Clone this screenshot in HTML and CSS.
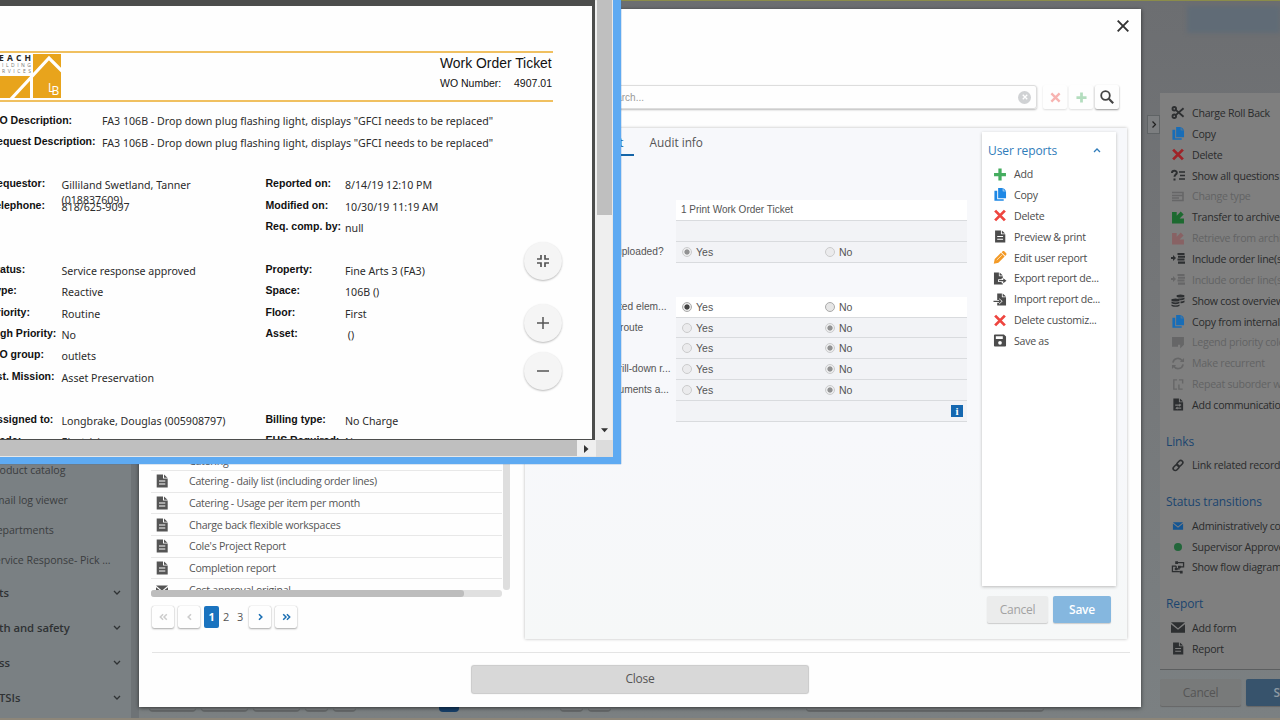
FILE: index.html
```
<!DOCTYPE html>
<html lang="en">
<head>
  <meta charset="UTF-8">
  <title>User reports</title>
  <link rel="stylesheet" href="styles.css">
</head>
<body>
  <svg class="sprite" aria-hidden="true">
    <symbol id="doc" viewBox="0 0 12 14"><path fill="currentColor" fill-rule="evenodd" d="M.7.5H7v4h4.700v9H.7zM3 6.500v1.100h6.300V6.500zm0 3v1.100h6.300V9.500z"/><path fill="currentColor" d="M8 .5l3.500 3.200H8z"/></symbol>
    <symbol id="copy" viewBox="0 0 14 14"><path fill="#1e88e5" d="M5 0h5v3.500h3.500V11H5z"/><path fill="#1e88e5" d="M10.600 0l2.900 2.900h-2.900zM1 3h3v9h7v1.800H1z"/></symbol>
    <symbol id="x" viewBox="0 0 12 12"><path stroke="currentColor" stroke-width="2.600" d="M1.500 1.500l9 9M10.500 1.500l-9 9"/></symbol>
    <symbol id="close" viewBox="0 0 12 12"><path stroke="currentColor" stroke-width="1.900" d="M.700.700l10.600 10.600M11.300.700L.700 11.300"/></symbol>
    <symbol id="plus" viewBox="0 0 12 12"><path stroke="currentColor" stroke-width="3" d="M6 .5v11M.5 6h11"/></symbol>
    <symbol id="pencil" viewBox="0 0 14 14"><path fill="#f39a26" d="M.3 13.700l1-5L8 2l4 4-6.700 6.700zM8.700 1.300L9.900.300c.5-.4 1.200-.4 1.700 0l2.100 2.100c.4.500.4 1.200 0 1.700l-1 1.200z"/><path stroke="#fff" stroke-width=".7" d="M3.500 9.800L9 4.500"/></symbol>
    <symbol id="export" viewBox="0 0 14 14"><path fill="currentColor" d="M.5.5h5.300v4H10v2.300H8.800v1H5v3h3.800v1.300H10v1.400H.500zM6.600.500L10 3.700H6.600z"/><path fill="currentColor" d="M6 8.700h4.500V6.600l3.500 2.700-3.500 2.700V9.900H6z"/></symbol>
    <symbol id="import" viewBox="0 0 14 14"><path fill="currentColor" d="M4 .5h5v4h4.500v9H4v-3h2v1.800L9.800 9 6 5.700v1.800H4z"/><path fill="currentColor" d="M9.900.5l3.600 3.300H9.900zM0 8.300h6v1.400H0zM6 6.500L8.800 9 6 11.500z"/></symbol>
    <symbol id="save" viewBox="0 0 14 14"><path fill="currentColor" fill-rule="evenodd" d="M1.500.5h9.700l2.300 2.300v9.700q0 1-1 1h-11q-1 0-1-1v-11q0-1 1-1zM2.500 2.500v3h7.500v-3zM7 7.500a2 2 0 100 4 2 2 0 000-4z"/></symbol>
    <symbol id="mail" viewBox="0 0 14 11"><path fill="currentColor" d="M0 .3h14L7 6.300zM0 2.200l7 5.600 7-5.600v8.500H0z"/></symbol>
    <symbol id="scissors" viewBox="0 0 14 14"><g fill="none" stroke="currentColor" stroke-width="2"><circle cx="3" cy="3" r="1.900"/><circle cx="3" cy="11" r="1.900"/><path d="M4.500 4.200L13 11.500M4.500 9.800L13 2.500"/></g></symbol>
    <symbol id="questions" viewBox="0 0 14 12"><path fill="none" stroke="currentColor" stroke-width="2" d="M1 3.500C1 .700 5.800.700 5.800 3.200 5.800 5.200 3.500 5 3.500 7.300M3.500 9v2"/><path stroke="currentColor" stroke-width="1.400" d="M8 2.500h6M9 6h5M8 9.500h6"/></symbol>
    <symbol id="card" viewBox="0 0 14 12"><path fill="none" stroke="currentColor" stroke-width="1.600" d="M1 2h11v3H1M12 5v5H1M1 7.500h7"/></symbol>
    <symbol id="archive" viewBox="0 0 12 12"><path fill="currentColor" d="M.5 1h4.300v3.300L8.500.5l2.700 2.700L7.500 7h4v4.500H.500z"/></symbol>
    <symbol id="stackin" viewBox="0 0 14 13"><path fill="currentColor" d="M0 5h2V3l3 3-3 3V7H0zM6.500 1h7v2h-7zM7 3.800h7v2H7zM6.500 6.600h7v2h-7zM7 9.400h7v2.400H7z"/></symbol>
    <symbol id="coins" viewBox="0 0 14 13"><g fill="currentColor"><ellipse cx="9.500" cy="2" rx="4" ry="1.500"/><path d="M7 4.200q3 1 6.500-.8v1.800Q11 6.800 9 6.200zM9.500 7.600q2 0 4-1v1.700q-2 1.200-4 1z"/><ellipse cx="4.500" cy="6" rx="4.200" ry="1.500"/><path d="M.5 7.500q4 2 8 0v1.800q-4 2-8 0zM.5 10.400q4 2 8 0v1.500q-4 1.800-8 0z"/></g></symbol>
    <symbol id="note" viewBox="0 0 12 12"><path fill="currentColor" d="M.5 1h11v7L8 11.500V8H6v2H.500z"/></symbol>
    <symbol id="cycle" viewBox="0 0 14 14"><path fill="none" stroke="currentColor" stroke-width="1.800" d="M1.500 6a5.500 5.500 0 0110-2M12.500 8a5.500 5.500 0 01-10 2"/><path fill="currentColor" d="M13.500 1v4.500H9zM.500 13V8.500H5z"/></symbol>
    <symbol id="repeat" viewBox="0 0 12 14"><path fill="none" stroke="currentColor" stroke-width="1.500" d="M5 2H1.500v10H5M7 2h4v4M7 7v5h4"/></symbol>
    <symbol id="message" viewBox="0 0 12 14"><path fill="currentColor" fill-rule="evenodd" d="M1 .5h6v4h4.500v9H1zM3 7v1.300h4V9.500L9.800 7.600 7.500 6v1zM9.500 11.500v-1.200H5.500V9.200L3 11l2.500 1.500v-1z"/><path fill="currentColor" d="M8 .5l3.500 3.200H8z"/></symbol>
    <symbol id="link" viewBox="0 0 14 14"><g fill="none" stroke="currentColor" stroke-width="1.700"><rect x="5.500" y="2.500" width="7" height="4.500" rx="2.200" transform="rotate(-45 9 4.700)"/><rect x="1.500" y="7" width="7" height="4.500" rx="2.200" transform="rotate(-45 5 9.300)"/></g></symbol>
    <symbol id="flow" viewBox="0 0 14 14"><path fill="none" stroke="currentColor" stroke-width="1.400" d="M5 1.800h8v4.500H8M5 5.500H1v6h4M5 5.500v3h4M5 11.500h4"/><path fill="currentColor" d="M4 .3h3v3H4zM7 5h3v2.800H7zM3.500 7.500h3v2.500h-3zM9 10.500h3v3H9z"/></symbol>
    <symbol id="down" viewBox="0 0 8 5"><path fill="none" stroke="currentColor" stroke-width="1.300" d="M1 1l3 3 3-3"/></symbol>
    <symbol id="next" viewBox="0 0 6 8"><path fill="none" stroke="currentColor" stroke-width="1.600" d="M1.500 1.200L4.300 4 1.500 6.800"/></symbol>
    <symbol id="last" viewBox="0 0 9 8"><path fill="none" stroke="currentColor" stroke-width="1.500" d="M1.200 1.200L4 4 1.200 6.800M4.900 1.200L7.700 4 4.900 6.800"/></symbol>
  </svg>

  <div class="app">
    <nav class="sidebar">
      <a>Product catalog</a>
      <a>Email log viewer</a>
      <a>Departments</a>
      <a>Service Response- Pick ...</a>
      <h4>ts<svg><use href="#down"/></svg></h4>
      <h4>th and safety<svg><use href="#down"/></svg></h4>
      <h4>ss<svg><use href="#down"/></svg></h4>
      <h4>TSIs<svg><use href="#down"/></svg></h4>
    </nav>
    <div class="workspace">
      <div class="toolbar"><i></i><i></i><i></i><i class="sm"></i><i class="sm"></i><b></b><i class="sm last"></i><i class="sm"></i><u></u></div>
    </div>
    <div class="gutter"><span class="collapse"><svg><use href="#down"/></svg></span></div>
    <aside class="actions">
      <div class="top-button"></div>
      <div class="action-panel">
        <ul>
          <li><svg><use href="#scissors"/></svg>Charge Roll Back</li>
          <li><svg><use href="#copy"/></svg>Copy</li>
          <li><svg class="red"><use href="#x"/></svg>Delete</li>
          <li><svg><use href="#questions"/></svg>Show all questions</li>
          <li class="off"><svg><use href="#card"/></svg>Change type</li>
          <li><svg class="green"><use href="#archive"/></svg>Transfer to archive</li>
          <li class="off"><svg class="red"><use href="#archive"/></svg>Retrieve from archive</li>
          <li><svg><use href="#stackin"/></svg>Include order line(s)</li>
          <li class="off"><svg><use href="#stackin"/></svg>Include order line(s)</li>
          <li><svg><use href="#coins"/></svg>Show cost overview</li>
          <li><svg><use href="#copy"/></svg>Copy from internal</li>
          <li class="off"><svg><use href="#note"/></svg>Legend priority colors</li>
          <li class="off"><svg><use href="#cycle"/></svg>Make recurrent</li>
          <li class="off"><svg><use href="#repeat"/></svg>Repeat suborder w</li>
          <li><svg><use href="#message"/></svg>Add communication</li>
        </ul>
        <h3>Links</h3>
        <ul><li><svg><use href="#link"/></svg>Link related records</li></ul>
        <h3>Status transitions</h3>
        <ul>
          <li><svg class="blue small"><use href="#mail"/></svg>Administratively co</li>
          <li><span class="dot"></span>Supervisor Approved</li>
          <li><svg><use href="#flow"/></svg>Show flow diagram</li>
        </ul>
        <h3>Report</h3>
        <ul>
          <li><svg><use href="#mail"/></svg>Add form</li>
          <li><svg><use href="#doc"/></svg>Report</li>
        </ul>
      </div>
      <div class="buttons"><span class="btn">Cancel</span><span class="btn primary">Save</span></div>
    </aside>
  </div>

  <div class="dialog">
    <div class="dialog-head"><svg><use href="#close"/></svg></div>
    <div class="search-row">
      <div class="search"><span>Search...</span><em><svg><use href="#x"/></svg></em></div>
      <span class="tool off"><svg class="red"><use href="#x"/></svg></span>
      <span class="tool off"><svg class="green"><use href="#plus"/></svg></span>
      <span class="tool"><svg class="lens" viewBox="0 0 14 14"><circle cx="5.500" cy="5.500" r="4.300" fill="none" stroke="#444" stroke-width="1.800"/><path d="M8.800 8.800l4.400 4.400" stroke="#444" stroke-width="2.200"/></svg></span>
    </div>
    <div class="dialog-body">
      <div class="list">
        <div class="list-view">
          <div class="rows">
            <div class="row">Catering</div>
            <div class="row"><svg><use href="#doc"/></svg>Catering - daily list (including order lines)</div>
            <div class="row"><svg><use href="#doc"/></svg>Catering - Usage per item per month</div>
            <div class="row"><svg><use href="#doc"/></svg>Charge back flexible workspaces</div>
            <div class="row"><svg><use href="#doc"/></svg>Cole's Project Report</div>
            <div class="row"><svg><use href="#doc"/></svg>Completion report</div>
            <div class="row"><svg><use href="#mail"/></svg>Cost approval original</div>
          </div>
          <div class="vbar"></div>
        </div>
        <div class="hbar"><div></div></div>
        <div class="pager">
          <span class="page-btn off"><svg class="flip"><use href="#last"/></svg></span>
          <span class="page-btn off"><svg class="flip"><use href="#next"/></svg></span>
          <b>1</b><span>2</span><span>3</span>
          <span class="page-btn"><svg><use href="#next"/></svg></span>
          <span class="page-btn"><svg><use href="#last"/></svg></span>
        </div>
      </div>
      <div class="detail">
        <div class="form">
          <div class="tabs"><span class="tab active">Report</span><span class="tab">Audit info</span></div>
          <div class="field"><label></label><div class="value edit">1 Print Work Order Ticket</div></div>
          <div class="field"><label></label><div class="value"></div></div>
          <div class="field"><label class="l1">uploaded?</label><div class="value"><span class="opt off"><i class="on"></i>Yes</span><span class="opt off"><i></i>No</span></div></div>
          <div class="field gap"><label>ted elem...</label><div class="value edit"><span class="opt"><i class="on"></i>Yes</span><span class="opt"><i></i>No</span></div></div>
          <div class="field"><label class="l2">route</label><div class="value"><span class="opt off"><i></i>Yes</span><span class="opt off"><i class="on"></i>No</span></div></div>
          <div class="field"><label></label><div class="value"><span class="opt off"><i></i>Yes</span><span class="opt off"><i class="on"></i>No</span></div></div>
          <div class="field"><label class="l3">rill-down r...</label><div class="value"><span class="opt off"><i></i>Yes</span><span class="opt off"><i class="on"></i>No</span></div></div>
          <div class="field"><label class="l3">uments a...</label><div class="value"><span class="opt off"><i></i>Yes</span><span class="opt off"><i class="on"></i>No</span></div></div>
          <div class="field"><label></label><div class="value"><span class="info">i</span></div></div>
        </div>
        <div class="side">
          <div class="card">
            <h3>User reports<svg><use href="#down"/></svg></h3>
            <ul>
              <li><svg class="green"><use href="#plus"/></svg>Add</li>
              <li><svg><use href="#copy"/></svg>Copy</li>
              <li><svg class="red"><use href="#x"/></svg>Delete</li>
              <li><svg><use href="#doc"/></svg>Preview &amp; print</li>
              <li><svg><use href="#pencil"/></svg>Edit user report</li>
              <li><svg><use href="#export"/></svg>Export report de...</li>
              <li><svg><use href="#import"/></svg>Import report de...</li>
              <li><svg class="red"><use href="#x"/></svg>Delete customiz...</li>
              <li><svg><use href="#save"/></svg>Save as</li>
            </ul>
          </div>
          <div class="buttons"><span class="btn">Cancel</span><span class="btn primary">Save</span></div>
        </div>
      </div>
    </div>
    <div class="dialog-foot"><span class="close">Close</span></div>
  </div>

  <div class="viewer">
    <div class="view-row">
      <div class="paper">
        <div class="letterhead">
          <svg class="logo" viewBox="0 0 62 46">
            <path fill="#e8a41c" d="M33 1h28v44H33zM-2 23h32v22H-2z"/>
            <path fill="none" stroke="#fff" stroke-width="3.200" d="M11 46L49 5l13 13"/>
            <path stroke="#fff" stroke-width="2" d="M31.500 0v46"/>
            <text class="brand" x="-1" y="7.500" textLength="32">EACH</text>
            <text class="brand-sub" x="2" y="14" textLength="29">ILDING</text>
            <text class="brand-sub" x="2" y="20" textLength="29">RVICES</text>
            <text class="mark" x="48" y="39">L</text><text class="mark" x="51.500" y="42">B</text>
          </svg>
          <div class="title">
            <div class="t1">Work Order Ticket</div>
            <div class="t2"><span>WO Number:</span><span>4907.01</span></div>
          </div>
        </div>
        <div class="sheet wide">
          <b>WO Description:</b><span>FA3 106B - Drop down plug flashing light, displays "GFCI needs to be replaced"</span>
          <b>Request Description:</b><span>FA3 106B - Drop down plug flashing light, displays "GFCI needs to be replaced"</span>
        </div>
        <div class="sheet">
          <b>Requestor:</b><span>Gilliland Swetland, Tanner<br>(018837609)</span><b>Reported on:</b><span>8/14/19 12:10 PM</span>
          <b>Telephone:</b><span>818/625-9097</span><b>Modified on:</b><span>10/30/19 11:19 AM</span>
          <b></b><span></span><b>Req. comp. by:</b><span>null</span>
          <b></b><span></span><b></b><span></span>
          <b>Status:</b><span>Service response approved</span><b>Property:</b><span>Fine Arts 3 (FA3)</span>
          <b>Type:</b><span>Reactive</span><b>Space:</b><span>106B ()</span>
          <b>Priority:</b><span>Routine</span><b>Floor:</b><span>First</span>
          <b>High Priority:</b><span>No</span><b>Asset:</b><span>&nbsp;()</span>
          <b>WO group:</b><span>outlets</span><b></b><span></span>
          <b>Est. Mission:</b><span>Asset Preservation</span><b></b><span></span>
          <b></b><span></span><b></b><span></span>
          <b>Assigned to:</b><span>Longbrake, Douglas (005908797)</span><b>Billing type:</b><span>No Charge</span>
          <b>Trade:</b><span>Electrician</span><b>EHS Required:</b><span>No</span>
        </div>
        <div class="zoom-tools">
          <span><svg viewBox="0 0 14 14"><path fill="none" stroke="#555" stroke-width="1.700" d="M1 5h4V1M9 1v4h4M13 9H9v4M5 13V9H1"/></svg></span>
          <span><svg viewBox="0 0 14 14"><path stroke="#555" stroke-width="1.500" d="M7 1v12M1 7h12"/></svg></span>
          <span><svg viewBox="0 0 14 14"><path stroke="#555" stroke-width="1.500" d="M1 7h12"/></svg></span>
        </div>
      </div>
      <div class="scroll-y"><div class="thumb"></div><svg viewBox="0 0 8 5"><path fill="#333" d="M0 0h8L4 4.500z"/></svg></div>
    </div>
    <div class="scroll-x"><div class="thumb"></div><div class="arrow"><svg viewBox="0 0 5 8"><path fill="#333" d="M0 0v8l4.500-4z"/></svg></div><div class="corner"></div></div>
  </div>
</body>
</html>
```
FILE: styles.css
```
* {
  box-sizing: border-box;
}
body {
  margin: 0;
  width: 1280px;
  height: 720px;
  overflow: hidden;
  position: relative;
  font-family: "Open Sans", sans-serif;
  font-size: 10.6px;
  letter-spacing: -0.27px;
  color: #555;
}
ul {
  list-style: none;
  margin: 0;
  padding: 0;
}
h3, h4 {
  margin: 0;
  font-weight: normal;
}
.sprite {
  position: absolute;
  width: 0;
  height: 0;
}
.red { color: #ee453f; }
.green { color: #45ad5f; }
.blue { color: #1e78c8; }

/* page behind the dialog */
.app {
  display: flex;
  height: 720px;
  border-top: 1px solid #8b8c4a;
  border-bottom: 2px solid #8d8679;
  background: linear-gradient(#6c6e71, #747678 40%, #7b8082);
}
.sidebar {
  width: 131px;
  padding-top: 454px;
  background: #7a8083;
  color: #3a3d3f;
  letter-spacing: -0.05px;
}
.sidebar a {
  display: block;
  height: 30px;
  line-height: 30px;
  margin-left: -11px;
  white-space: nowrap;
}
.sidebar h4 {
  display: flex;
  align-items: center;
  justify-content: space-between;
  height: 35px;
  padding-right: 10px;
  margin-left: -1px;
  font-size: 11.3px;
  font-weight: 600;
  color: #2f3234;
  white-space: nowrap;
}
.sidebar svg {
  width: 8px;
  height: 5px;
}
.workspace {
  width: 1018px;
  padding: 698px 0 0 16px;
  border-left: 8px solid #6e7376;
}
.toolbar {
  display: flex;
  gap: 5px;
}
.toolbar i, .toolbar b, .toolbar u {
  width: 47px;
  height: 13px;
  background: #7e8183;
  border-bottom: 2px solid #65686a;
  border-radius: 4px;
}
.toolbar i:first-child { margin-left: -6px; }
.toolbar .sm { width: 23px; }
.toolbar b { width: 20px; margin-left: 78px; background: #173f68; border-color: #173f68; }
.toolbar .last { margin-left: 96px; }
.toolbar u { width: 238px; margin-left: 190px; }
.gutter {
  width: 11px;
  flex: none;
  padding-top: 114px;
}
.collapse {
  display: flex;
  align-items: center;
  justify-content: center;
  width: 13px;
  height: 19px;
  margin-left: -2px;
  background: #7c7e80;
  border: 1px solid #5f6365;
}
.collapse svg {
  width: 8px;
  height: 5px;
  transform: rotate(-90deg);
  color: #222;
}
.actions {
  flex: none;
  width: 120px;
  overflow: hidden;
  white-space: nowrap;
  color: #2a2b2c;
}
.top-button {
  height: 27px;
  margin: 5px 0 60px 27px;
  background: #606b76;
  filter: blur(2px);
}
.action-panel {
  height: 577px;
  padding: 9.5px 0 0 6px;
  background: #7f7f7f;
  border-bottom: 1px solid #5c5e5f;
}
li {
  display: flex;
  align-items: center;
  height: 20.87px;
  white-space: nowrap;
}
li svg {
  width: 14px;
  height: 13px;
  margin: 0 7px 0 5px;
  flex: none;
}
.actions svg { color: #2d2f31; }
.actions .red { color: #9f2328; }
.actions .green { color: #1d6a30; }
.actions .blue { color: #155592; }
.actions use[href="#copy"] { filter: brightness(0.8); }
.actions .off { color: #626364; }
.actions .off svg { opacity: 0.3; }
.actions svg.small { height: 8px; }
.dot {
  flex: none;
  width: 8px;
  height: 8px;
  margin: 0 10px 0 8px;
  border-radius: 50%;
  background: #22663a;
}
h3 {
  font-size: 12px;
  letter-spacing: -0.1px;
  color: #2f7cba;
}
.action-panel h3 {
  height: 39.5px;
  line-height: 18px;
  padding-top: 17.5px;
  color: #1b456f;
}
.actions .buttons { margin-top: 9px; }
.buttons {
  display: flex;
  gap: 5px;
}
.btn {
  width: 61px;
  height: 27px;
  line-height: 27px;
  text-align: center;
  font-size: 12px;
  color: #a2a2a2;
  background: #ebecec;
  border-radius: 2px;
  box-shadow: 0 1px 1px #ccc;
}
.btn.primary {
  width: 58px;
  color: #fff;
  font-weight: 600;
  background: #85b7df;
}
.actions .btn {
  flex: none;
  width: 81px;
  color: #555;
  background: #787a7a;
  box-shadow: 0 1px 1px #666;
}
.actions .btn.primary {
  background: #37536c;
  color: #8d99a3;
}

/* dialog */
.dialog {
  position: absolute;
  left: 139px;
  top: 9px;
  width: 1002px;
  height: 698px;
  background: #fefefe;
  box-shadow: 0 1px 4px rgba(0, 0, 0, 0.6);
}
.dialog-head {
  height: 76px;
  padding: 11px 12px;
  text-align: right;
}
.dialog-head svg {
  width: 12px;
  height: 12px;
  color: #333;
}
.search-row {
  display: flex;
  gap: 2px;
  height: 24px;
  padding-right: 22px;
}
.search {
  display: flex;
  align-items: center;
  justify-content: space-between;
  width: 434px;
  margin: 0 4px 0 auto;
  padding: 0 5px 0 0;
  border: 1px solid #ddd;
  border-radius: 3px;
  box-shadow: 0 1px 2px #bbb;
  font-size: 10px;
  letter-spacing: 0;
  font-family: "Liberation Sans", sans-serif;
  color: #999;
}
.search em {
  display: flex;
  align-items: center;
  justify-content: center;
  width: 13px;
  height: 13px;
  border-radius: 50%;
  background: #d0d2d4;
}
.search em svg {
  width: 6px;
  height: 6px;
  color: #fff;
}
.tool {
  display: flex;
  align-items: center;
  justify-content: center;
  width: 24px;
  border-radius: 2px;
  box-shadow: 0 1px 2px #999;
}
.tool.off { box-shadow: 0 1px 2px #ddd; }
.tool svg { width: 11px; height: 11px; }
.tool.off svg { opacity: 0.4; }
.tool svg.lens { width: 14px; height: 14px; }
.dialog-body {
  display: flex;
  height: 543px;
  padding: 19px 14px 0 12px;
}
.list {
  width: 374px;
  padding-top: 333px;
}
.list-view {
  display: flex;
  height: 129px;
}
.rows {
  width: 351px;
  height: 129px;
  overflow: hidden;
}
.row {
  display: flex;
  align-items: center;
  height: 21.7px;
  padding-left: 38px;
  border-bottom: 1px solid #e8e8e8;
}
.row:first-child {
  height: 9px;
  padding-bottom: 9px;
}
.row svg {
  width: 12px;
  height: 14px;
  margin: 0 21px 0 -33px;
  flex: none;
}
.vbar {
  width: 7px;
  margin-left: 1px;
  background: #dedede;
  border-radius: 0 0 3px 3px;
}
.hbar {
  width: 351px;
  height: 7px;
  background: #e0e0e0;
  border-radius: 3px;
}
.hbar div {
  width: 313px;
  height: 7px;
  background: #bdbdbd;
  border-radius: 3px;
}
.pager {
  display: flex;
  align-items: center;
  gap: 4px;
  margin: 9px 0 0 1px;
  font-size: 11px;
}
.pager span, .pager b {
  height: 22px;
  line-height: 21px;
  text-align: center;
  width: 10px;
}
.pager b {
  width: 15px;
  margin-right: -2px;
  color: #fff;
  background: #1a73bf;
  border-radius: 2px;
}
.pager .page-btn {
  display: flex;
  align-items: center;
  justify-content: center;
  width: 22px;
  color: #1b6fb3;
  border-radius: 2px;
  box-shadow: 0 1px 2px #aaa, 0 0 1px #bbb;
}
.pager .page-btn.off { color: #ccc; }
.pager svg {
  width: 9px;
  height: 8px;
}
.pager .flip { transform: scaleX(-1); }
.detail {
  display: flex;
  width: 602px;
  height: 511px;
  padding: 4px 11px 0 0;
  background: linear-gradient(#f7f8fb 60%, #f6f8f8);
  box-shadow: 0 0 3px #bbb;
}
.form {
  width: 457px;
  padding-left: 93px;
}
.tabs {
  display: flex;
  gap: 16px;
  height: 68px;
  font-size: 11.8px;
  letter-spacing: 0;
}
.tab {
  height: 24px;
  line-height: 21px;
}
.tab.active {
  display: flex;
  justify-content: flex-end;
  width: 15.5px;
  padding-right: 10px;
  overflow: hidden;
  color: #1b6fb3;
  border-bottom: 2px solid #1565a8;
}
.field {
  display: flex;
  height: 20.9px;
  font-family: "Liberation Sans", sans-serif;
  font-size: 10px;
  letter-spacing: 0;
  line-height: 20px;
}
.field.gap { margin-top: 34px; }
.field label {
  width: 58px;
  text-indent: 1px;
  font-size: 10.2px;
  white-space: nowrap;
}
.field label.l1 { text-indent: -2px; }
.field label.l2 { text-indent: 2px; }
.field label.l3 { text-indent: 0.5px; }
.value {
  display: flex;
  align-items: center;
  width: 291px;
  padding: 0 0 0 5px;
  background: #f2f3f6;
  border-bottom: 1px solid #d9dbde;
}
.value.edit {
  padding-top: 1px;
  background: #fff;
}
.opt {
  display: flex;
  align-items: center;
  gap: 4px;
  width: 143.5px;
  padding-left: 1px;
  font-size: 10.5px;
}
.opt i {
  width: 10px;
  height: 10px;
  border: 1px solid #aaa;
  border-radius: 50%;
  background: #e6e6e6;
}
.opt i.on { background: radial-gradient(circle, #444 0 2.2px, #e9e9e9 3px); }
.opt.off i { opacity: 0.55; }
.info {
  width: 12px;
  height: 12px;
  margin-left: 270px;
  background: #1668b0;
  color: #fff;
  font: bold 11px/12px "Liberation Serif", serif;
  text-align: center;
}
.side .card {
  width: 134px;
  height: 454px;
  padding: 10px 6px;
  background: #fff;
  box-shadow: 0 1px 3px #bbb;
}
.card h3 {
  display: flex;
  justify-content: space-between;
  align-items: center;
  height: 21.7px;
  padding: 0 9px 4px 0;
}
.card h3 svg {
  width: 8px;
  height: 5px;
  transform: rotate(180deg);
}
.card li { color: #4c4c4c; }
.side .buttons { margin: 10px 0 0 5px; }
.dialog-foot {
  height: 55px;
  margin: 0 11px 0 13px;
  padding: 13px 0 0 320px;
  border-top: 1px solid #e4e4e4;
}
.close {
  display: block;
  width: 336px;
  height: 27px;
  line-height: 26px;
  text-align: center;
  font-size: 12px;
  background: #d8d8d8;
  border-radius: 2px;
  box-shadow: 0 0 1px 1px #c8c8c8;
}

/* ticket viewer window */
.viewer {
  position: absolute;
  left: 0;
  top: 0;
  width: 621px;
  height: 464px;
  border: solid #5eaaf2;
  border-width: 0 8px 7px 0;
  box-shadow: inset 0 0 0 1px #e8e8e8, 0 0 1px #2c6cb0;
  background: #efefef;
}
.view-row {
  display: flex;
  height: 440px;
}
.paper {
  position: relative;
  width: 595px;
  height: 440px;
  overflow: hidden;
  background: #fefefe;
  border: solid #4c4d4c;
  border-width: 6px 3px 1px 0;
  letter-spacing: 0;
  color: #2c2c2c;
}
.letterhead {
  display: flex;
  justify-content: space-between;
  width: 553px;
  height: 51px;
  margin-top: 45px;
  border: solid #f0c060;
  border-width: 2px 0;
}
.logo {
  width: 62px;
  height: 46px;
}
.brand {
  font: bold 8.5px "Open Sans", sans-serif;
  fill: #222;
}
.brand-sub {
  font: 5px "Open Sans", sans-serif;
  fill: #777;
}
.mark {
  font: 12px "Open Sans", sans-serif;
  fill: #fff;
}
.title {
  width: 113px;
  font-family: "Liberation Sans", sans-serif;
  color: #111;
}
.t1 {
  font-size: 13.9px;
  line-height: 20px;
  white-space: nowrap;
}
.t2 {
  display: flex;
  justify-content: space-between;
  padding-right: 1px;
  font-size: 10.5px;
  line-height: 21px;
}
.sheet {
  display: grid;
  grid-template-columns: 72px 204px 79.5px 1fr;
  grid-auto-rows: 21.4px;
  margin-left: -10.5px;
  font: 10.63px/15px "Noto Sans", sans-serif;
  white-space: nowrap;
}
.sheet.wide {
  grid-template-columns: 112.5px 1fr;
  padding-top: 12px;
  height: 75.3px;
}
.sheet b {
  font: bold 10.55px/13px "Liberation Sans", sans-serif;
  color: #111;
}
.sheet span { padding-top: 1px; }
.sheet.wide span { padding-top: 0.4px; }
.zoom-tools {
  position: absolute;
  left: 524px;
  top: 236px;
}
.zoom-tools span {
  display: flex;
  align-items: center;
  justify-content: center;
  width: 38px;
  height: 38px;
  margin-bottom: 10px;
  border-radius: 50%;
  background: #f5f5f5;
  box-shadow: 0 1px 2px #bbb;
}
.zoom-tools span:first-child { margin-bottom: 24px; }
.zoom-tools svg {
  width: 14px;
  height: 14px;
}
.scroll-y {
  display: flex;
  flex-direction: column;
  align-items: center;
  width: 18px;
  padding: 0 1px 7px 2px;
}
.scroll-y .thumb {
  width: 15px;
  height: 215px;
  margin-bottom: auto;
  background: #bfbfbf;
}
.scroll-y svg {
  width: 7px;
  height: 5px;
}
.scroll-x {
  display: flex;
  height: 17px;
}
.scroll-x .thumb {
  width: 577px;
  height: 16px;
  background: #bfbfbf;
}
.arrow {
  display: flex;
  align-items: center;
  justify-content: center;
  width: 19px;
}
.arrow svg { width: 5px; height: 8px; }
.corner { flex: 1; background: #dcdcdc; }
```
